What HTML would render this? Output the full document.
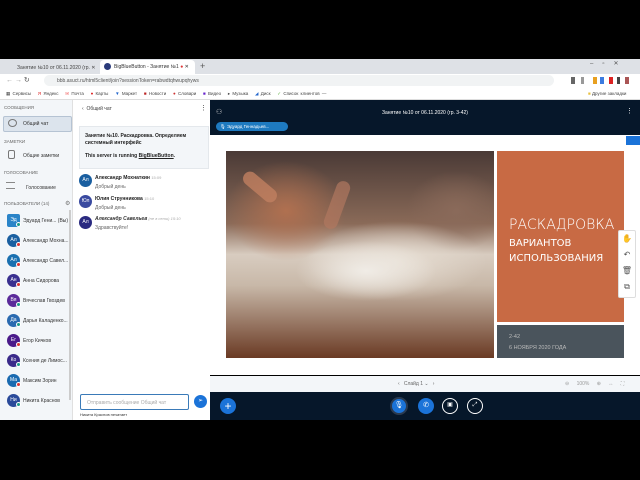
<!DOCTYPE html>
<html><head><meta charset="utf-8"><style>
*{margin:0;padding:0;box-sizing:border-box}
body{width:640px;height:480px;background:#000;font-family:"Liberation Sans",sans-serif;position:relative;overflow:hidden;font-size:5px;color:#333}
.a{position:absolute}
.av{position:absolute;width:13px;height:13px;border-radius:50%;color:#fff;font-size:5px;text-align:center;line-height:13px}
.ul{position:absolute;left:23px;font-size:5px;color:#333}
.bd{position:absolute;width:5px;height:5px;border-radius:50%;border:1px solid #fff}
</style></head><body>
<!-- tabs -->
<div class="a" style="left:0;top:59px;width:640px;height:15px;background:#dee1e6"></div>
<div class="a" style="left:3px;top:61px;width:95px;height:13px;font-size:5px;color:#444;padding:4px 0 0 14px">Занятие №10 от 06.11.2020 (гр. ✕</div>
<div class="a" style="left:100px;top:60px;width:95px;height:14px;background:#fff;border-radius:4px 4px 0 0;font-size:5px;color:#333;padding:4px 0 0 14px">BigBlueButton - Занятие №1 <span style="color:#d33">●</span> ✕</div>
<div class="a" style="left:104px;top:63px;width:7px;height:7px;border-radius:50%;background:#2a3a7a"></div>
<div class="a" style="left:200px;top:61px;font-size:9px;color:#555">+</div>
<div class="a" style="left:590px;top:60px;font-size:6px;color:#555;letter-spacing:9px">–▫✕</div>
<!-- address -->
<div class="a" style="left:0;top:74px;width:640px;height:14px;background:#fff"></div>
<div class="a" style="left:6px;top:76px;font-size:7px;color:#999">←  → <span style="color:#555">↻</span></div>
<div class="a" style="left:44px;top:75px;width:510px;height:11px;background:#f1f3f4;border-radius:6px;font-size:5px;color:#555;padding:3px 0 0 13px">bbb.asuct.ru/html5client/join?sessionToken=rabwdtqhwupqhyws</div>
<div class="a" style="left:571px;top:77px;width:60px;height:7px;background:linear-gradient(90deg,#666 0 4px,#fff 4px 10px,#999 10px 13px,#fff 13px 22px,#e8a020 22px 26px,#fff 26px 29px,#3b7be0 29px 33px,#fff 33px 38px,#d22 38px 42px,#fff 42px 46px,#444 46px 49px,#fff 49px 54px,#a55 54px 58px,#fff 58px)"></div>
<!-- bookmarks -->
<div class="a" style="left:0;top:88px;width:640px;height:12px;background:#fff;border-bottom:1px solid #ddd;font-size:4.5px;color:#444;padding:3px 0 0 6px;white-space:nowrap;word-spacing:1px">▦ Сервисы &nbsp; <span style="color:#d22">Я</span> Яндекс &nbsp; <span style="color:#e44">✉</span> Почта &nbsp; <span style="color:#d22">●</span> Карты &nbsp; <span style="color:#26c">▼</span> Маркет &nbsp; <span style="color:#b22">■</span> Новости &nbsp; <span style="color:#c33">●</span> Словари &nbsp; <span style="color:#62c">■</span> Видео &nbsp; ▸ Музыка &nbsp; <span style="color:#26c">◢</span> Диск &nbsp; <span style="color:#5a3">✓</span> Список клиентов —</div>
<div class="a" style="left:588px;top:91px;font-size:4.5px;color:#444"><span style="color:#e8c040">■</span> Другие закладки</div>
<!-- sidebar -->
<div class="a" style="left:0;top:100px;width:72px;height:320px;background:#f3f6f9"></div>
<div class="a" style="left:4px;top:105px;font-size:4.5px;color:#666">СООБЩЕНИЯ</div>
<div class="a" style="left:3px;top:116px;width:69px;height:16px;background:#dce4ed;border:1px solid #b5c3d3;border-radius:2px"></div>
<div class="a" style="left:8px;top:119px;width:9px;height:8px;border:1px solid #777;border-radius:50%"></div>
<div class="a" style="left:23px;top:121px;font-size:5px;color:#333">Общий чат</div>
<div class="a" style="left:4px;top:139px;font-size:4.5px;color:#666">ЗАМЕТКИ</div>
<div class="a" style="left:8px;top:150px;width:7px;height:9px;border:1px solid #777;border-radius:2px"></div>
<div class="a" style="left:23px;top:153px;font-size:5px;color:#333">Общие заметки</div>
<div class="a" style="left:4px;top:170px;font-size:4.5px;color:#666">ГОЛОСОВАНИЕ</div>
<div class="a" style="left:6px;top:182px;width:9px;height:7px;border-top:1px solid #888;border-bottom:1px solid #888"></div>
<div class="a" style="left:26px;top:185px;font-size:5px;color:#333">Голосование</div>
<div class="a" style="left:4px;top:201px;font-size:4.5px;color:#666">ПОЛЬЗОВАТЕЛИ (14)</div>
<div class="a" style="left:65px;top:200px;font-size:6px;color:#777">⚙</div>
<div class="a" style="left:69px;top:210px;width:2px;height:190px;background:#ccc"></div>
<div class="av" style="left:7px;top:214px;border-radius:2px;background:#2a84c8">Эд</div>
<div class="ul" style="top:218px">Эдуард Гени... (Вы)</div>
<div class="av" style="left:7px;top:234px;background:#1a5fa0">Ал</div><div class="ul" style="top:238px">Александр Мохна...</div>
<div class="av" style="left:7px;top:254px;background:#1a70b0">Ал</div><div class="ul" style="top:258px">Александр Савел...</div>
<div class="av" style="left:7px;top:274px;background:#3a3090">Ан</div><div class="ul" style="top:278px">Анна Сидорова</div>
<div class="av" style="left:7px;top:294px;background:#5a2a9a">Вя</div><div class="ul" style="top:298px">Вячеслав Гвоздев</div>
<div class="av" style="left:7px;top:314px;background:#2a6ab0">Да</div><div class="ul" style="top:318px">Дарья Каладенко...</div>
<div class="av" style="left:7px;top:334px;background:#4a1a8a">Ег</div><div class="ul" style="top:338px">Егор Кичков</div>
<div class="av" style="left:7px;top:354px;background:#3a2a8a">Ко</div><div class="ul" style="top:358px">Ксения де Лимос...</div>
<div class="av" style="left:7px;top:374px;background:#1a6ab0">Ма</div><div class="ul" style="top:378px">Максим Зорин</div>
<div class="av" style="left:7px;top:394px;background:#2a4a9a">Ни</div><div class="ul" style="top:398px">Никита Краснов</div>
<div class="bd" style="left:16px;top:222px;background:#1a9a8a"></div>
<div class="bd" style="left:16px;top:242px;background:#d33"></div>
<div class="bd" style="left:16px;top:262px;background:#d33"></div>
<div class="bd" style="left:16px;top:282px;background:#d33"></div>
<div class="bd" style="left:16px;top:302px;background:#1a9a8a"></div>
<div class="bd" style="left:16px;top:322px;background:#1a9a8a"></div>
<div class="bd" style="left:16px;top:342px;background:#d33"></div>
<div class="bd" style="left:16px;top:362px;background:#1a9a8a"></div>
<div class="bd" style="left:16px;top:382px;background:#d33"></div>
<div class="bd" style="left:16px;top:402px;background:#1a9a8a"></div>
<!-- chat -->
<div class="a" style="left:72px;top:100px;width:138px;height:320px;background:#fff;border-left:1px solid #e0e0e0"></div>
<div class="a" style="left:82px;top:106px;font-size:5px;color:#444">‹ &nbsp;Общий чат</div>
<div class="a" style="left:200px;top:104px;font-size:7px;color:#444">⋮</div>
<div class="a" style="left:79px;top:126px;width:130px;height:43px;background:#f3f6f9;border:1px solid #e4e8ec;font-size:5px;font-weight:bold;color:#222;padding:6px 5px;line-height:7px">Занятие №10. Раскадровка. Определяем системный интерфейс<br><span style="display:block;margin-top:6px">This server is running <u>BigBlueButton</u>.</span></div>
<div class="av" style="left:79px;top:174px;background:#1a5fa0">Ал</div>
<div class="a" style="left:95px;top:175px;font-size:5px;font-weight:bold;color:#222">Александр Мохнаткин <span style="font-weight:normal;color:#aaa;font-size:4px">15:09</span></div>
<div class="a" style="left:95px;top:184px;font-size:5px;color:#666">Добрый день</div>
<div class="av" style="left:79px;top:195px;background:#3a4aa0">Юл</div>
<div class="a" style="left:95px;top:196px;font-size:5px;font-weight:bold;color:#222">Юлия Струнникова <span style="font-weight:normal;color:#aaa;font-size:4px">15:10</span></div>
<div class="a" style="left:95px;top:205px;font-size:5px;color:#666">Добрый день</div>
<div class="av" style="left:79px;top:216px;background:#2a2a80">Ал</div>
<div class="a" style="left:95px;top:216px;font-size:5px;font-weight:bold;font-style:italic;color:#333">Александр Савельев<span style="font-weight:normal;color:#aaa;font-size:4px"> (не в сети) 15:10</span></div>
<div class="a" style="left:95px;top:225px;font-size:5px;color:#666">Здравствуйте!</div>
<div class="a" style="left:80px;top:394px;width:109px;height:16px;border:1px solid #3a7ab8;border-radius:2px;font-size:5px;color:#aaa;padding:5px 0 0 6px">Отправить сообщение Общий чат</div>
<div class="a" style="left:194px;top:395px;width:13px;height:13px;border-radius:50%;background:#1b73d8;color:#fff;font-size:6px;text-align:center;line-height:13px">➢</div>
<div class="a" style="left:80px;top:412px;font-size:4px;color:#333">Никита Краснов печатает</div>
<!-- main -->
<div class="a" style="left:210px;top:100px;width:430px;height:35px;background:#06172a"></div>
<div class="a" style="left:216px;top:108px;font-size:7px;color:#ccc">⚇</div>
<div class="a" style="left:382px;top:110px;font-size:5px;color:#fff">Занятие №10 от 06.11.2020 (гр. 3-42)</div>
<div class="a" style="left:626px;top:107px;font-size:7px;color:#fff">⋮</div>
<div class="a" style="left:216px;top:122px;width:72px;height:9px;background:#1e7ac0;border-radius:5px;font-size:4.5px;color:#fff;padding:2px 0 0 4px">🎙 Эдуард Геннадьев...</div>
<div class="a" style="left:210px;top:135px;width:430px;height:240px;background:#fff"></div>
<div class="a" style="left:626px;top:136px;width:14px;height:9px;background:#1b73d8"></div>
<div class="a" style="left:226px;top:151px;width:268px;height:207px;background:
radial-gradient(ellipse 70px 30px at 140px 120px,#f0ece6,transparent),
radial-gradient(ellipse 90px 40px at 170px 110px,#e6ddd2,transparent),
radial-gradient(ellipse 60px 50px at 60px 60px,#b07050,transparent),
radial-gradient(ellipse 50px 40px at 230px 60px,#8a6a5a,transparent),
linear-gradient(180deg,#4a3a36 0%,#8a6a58 35%,#d8ccc0 50%,#c8b8a8 65%,#6a3a24 100%)"></div>
<div class="a" style="left:240px;top:180px;width:40px;height:14px;background:#c08060;transform:rotate(40deg);border-radius:7px;opacity:.8"></div>
<div class="a" style="left:330px;top:180px;width:14px;height:50px;background:#b07860;transform:rotate(20deg);border-radius:7px;opacity:.7"></div>
<div class="a" style="left:497px;top:151px;width:127px;height:171px;background:#c86a44"></div>
<div class="a" style="left:509px;top:217px;font-size:14px;color:#fff;line-height:16px;font-family:'DejaVu Sans',sans-serif;font-weight:300">РАСКАДРОВКА</div>
<div class="a" style="left:509px;top:236px;font-size:10px;color:#fff;line-height:15px;font-family:'DejaVu Sans',sans-serif">ВАРИАНТОВ<br>ИСПОЛЬЗОВАНИЯ</div>
<div class="a" style="left:497px;top:325px;width:127px;height:33px;background:#4a545c"></div>
<div class="a" style="left:509px;top:332px;font-size:5.5px;color:#bbb;line-height:11px">2-42<br>6 НОЯБРЯ 2020 ГОДА</div>
<div class="a" style="left:618px;top:230px;width:18px;height:68px;background:#fff;border:1px solid #ddd;border-radius:2px;font-size:8px;color:#555;text-align:center;line-height:16px">✋<br>↶<br>🗑<br>⧉</div>
<div class="a" style="left:210px;top:376px;width:430px;height:16px;background:#f3f6f9"></div>
<div class="a" style="left:398px;top:381px;font-size:5px;color:#666">‹ &nbsp; Слайд 1 ⌄ &nbsp; ›</div>
<div class="a" style="left:565px;top:381px;font-size:5px;color:#999;word-spacing:6px">⊖ 100% ⊕ ↔ ⛶</div>
<div class="a" style="left:210px;top:392px;width:430px;height:28px;background:#06172a"></div>
<div class="a" style="left:220px;top:398px;width:16px;height:16px;border-radius:50%;background:#1b73d8;color:#fff;font-size:12px;text-align:center;line-height:16px">+</div>
<div class="a" style="left:390px;top:397px;width:18px;height:18px;border-radius:50%;background:#1b73d8;border:2px solid #2a3a50;color:#fff;font-size:7px;text-align:center;line-height:14px">🎙</div>
<div class="a" style="left:418px;top:398px;width:16px;height:16px;border-radius:50%;background:#1b73d8;color:#fff;font-size:7px;text-align:center;line-height:16px">✆</div>
<div class="a" style="left:442px;top:398px;width:16px;height:16px;border-radius:50%;border:1.5px solid #fff;color:#fff;font-size:6px;text-align:center;line-height:13px">▣</div>
<div class="a" style="left:467px;top:398px;width:16px;height:16px;border-radius:50%;border:1.5px solid #fff;color:#fff;font-size:6px;text-align:center;line-height:13px">⤢</div>
</body></html>
